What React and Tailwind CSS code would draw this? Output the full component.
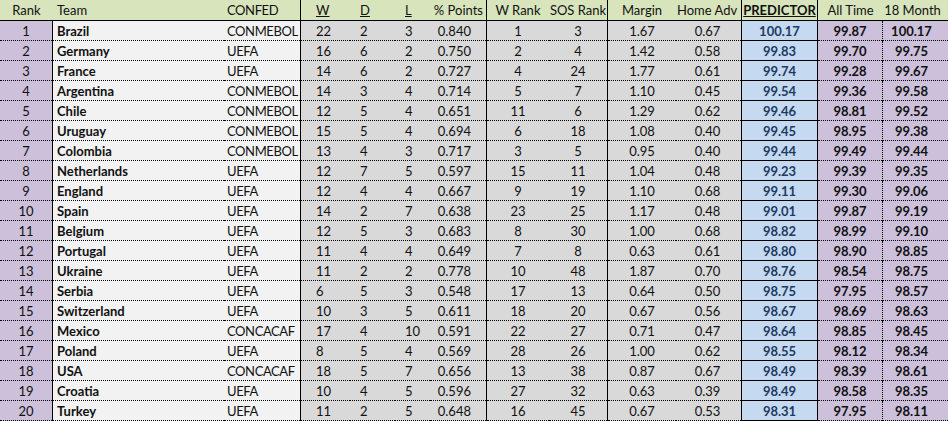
import React from "react";

const rows = [
  [1, "Brazil", "CONMEBOL", 22, 2, 3, "0.840", 1, 3, "1.67", "0.67", "100.17", "99.87", "100.17"],
  [2, "Germany", "UEFA", 16, 6, 2, "0.750", 2, 4, "1.42", "0.58", "99.83", "99.70", "99.75"],
  [3, "France", "UEFA", 14, 6, 2, "0.727", 4, 24, "1.77", "0.61", "99.74", "99.28", "99.67"],
  [4, "Argentina", "CONMEBOL", 14, 3, 4, "0.714", 5, 7, "1.10", "0.45", "99.54", "99.36", "99.58"],
  [5, "Chile", "CONMEBOL", 12, 5, 4, "0.651", 11, 6, "1.29", "0.62", "99.46", "98.81", "99.52"],
  [6, "Uruguay", "CONMEBOL", 15, 5, 4, "0.694", 6, 18, "1.08", "0.40", "99.45", "98.95", "99.38"],
  [7, "Colombia", "CONMEBOL", 13, 4, 3, "0.717", 3, 5, "0.95", "0.40", "99.44", "99.49", "99.44"],
  [8, "Netherlands", "UEFA", 12, 7, 5, "0.597", 15, 11, "1.04", "0.48", "99.23", "99.39", "99.35"],
  [9, "England", "UEFA", 12, 4, 4, "0.667", 9, 19, "1.10", "0.68", "99.11", "99.30", "99.06"],
  [10, "Spain", "UEFA", 14, 2, 7, "0.638", 23, 25, "1.17", "0.48", "99.01", "99.87", "99.19"],
  [11, "Belgium", "UEFA", 12, 5, 3, "0.683", 8, 30, "1.00", "0.68", "98.82", "98.99", "99.10"],
  [12, "Portugal", "UEFA", 11, 4, 4, "0.649", 7, 8, "0.63", "0.61", "98.80", "98.90", "98.85"],
  [13, "Ukraine", "UEFA", 11, 2, 2, "0.778", 10, 48, "1.87", "0.70", "98.76", "98.54", "98.75"],
  [14, "Serbia", "UEFA", 6, 5, 3, "0.548", 17, 13, "0.64", "0.50", "98.75", "97.95", "98.57"],
  [15, "Switzerland", "UEFA", 10, 3, 5, "0.611", 18, 20, "0.67", "0.56", "98.67", "98.69", "98.63"],
  [16, "Mexico", "CONCACAF", 17, 4, 10, "0.591", 22, 27, "0.71", "0.47", "98.64", "98.85", "98.45"],
  [17, "Poland", "UEFA", 8, 5, 4, "0.569", 28, 26, "1.00", "0.62", "98.55", "98.12", "98.34"],
  [18, "USA", "CONCACAF", 18, 5, 7, "0.656", 13, 38, "0.87", "0.67", "98.49", "98.39", "98.61"],
  [19, "Croatia", "UEFA", 10, 4, 5, "0.596", 27, 32, "0.63", "0.39", "98.49", "98.58", "98.35"],
  [20, "Turkey", "UEFA", 11, 2, 5, "0.648", 16, 45, "0.67", "0.53", "98.31", "97.95", "98.11"],
];

const grid =
  "grid grid-cols-[53px_171px_77px_49px_45px_35px_57px_62px_59px_68px_65px_77px_65px_65px]";

function Cell({ className = "", inner = "", solid = false, children }) {
  return (
    <div className={`flex flex-col h-full ${className}`}>
      <div className={`flex items-center h-[19px] pt-[2px] whitespace-nowrap overflow-hidden ${inner}`}>
        {children}
      </div>
      <div className={`border-t border-black ${solid ? "border-solid" : "border-dotted"}`} />
    </div>
  );
}

function H({ className = "", children }) {
  return (
    <div className={`flex items-center h-full pt-[2px] whitespace-nowrap overflow-hidden ${className}`}>
      {children}
    </div>
  );
}

export default function App() {
  return (
    <div
      className="w-[948px] h-[421px] bg-white text-[13px] text-[#111] overflow-hidden"
      style={{ fontFamily: "Lato, 'Open Sans', sans-serif" }}
    >
      <div className={`${grid} h-[21px] bg-[#d8e4bc] border-b border-black`}>
        <H className="justify-center">Rank</H>
        <H className="pl-[4px]">Team</H>
        <H className="pl-[3px] border-r border-black tracking-[-0.4px]">CONFED</H>
        <H className="pl-[15px]"><span className="underline">W</span></H>
        <H className="pl-[10px]"><span className="underline">D</span></H>
        <H className="pl-[10px]"><span className="underline">L</span></H>
        <H className="justify-end pr-[3px] border-r border-black">% Points</H>
        <H className="justify-center">W Rank</H>
        <H className="justify-center border-r border-black">SOS Rank</H>
        <H className="justify-center">Margin</H>
        <H className="pl-[1px]">Home Adv</H>
        <H className="justify-center font-bold border-l border-r border-black">
          <span className="underline">PREDICTOR</span>
        </H>
        <H className="justify-center">All Time</H>
        <H className="justify-center pr-[6px]">18 Month</H>
      </div>
      {rows.map((r) => (
        <div key={r[0]} className={`${grid} h-[20px]`}>
          <Cell className="bg-[#ccc0da] border-r border-black" inner="justify-center">{r[0]}</Cell>
          <Cell className="bg-[#f2f2f2]" inner="pl-[4px] font-bold">{r[1]}</Cell>
          <Cell className="bg-[#f2f2f2] border-r border-black" inner="pl-[3px] tracking-[-0.4px]">{r[2]}</Cell>
          <Cell className="bg-[#d9d9d9]" inner="pl-[15px]">{r[3]}</Cell>
          <Cell className="bg-[#d9d9d9]" inner="pl-[10px]">{r[4]}</Cell>
          <Cell className="bg-[#d9d9d9]" inner="pl-[10px]">{r[5]}</Cell>
          <Cell className="bg-[#d9d9d9] border-r border-black" inner="justify-end pr-[15px]">{r[6]}</Cell>
          <Cell className="bg-[#d9d9d9]" inner="justify-center">{r[7]}</Cell>
          <Cell className="bg-[#d9d9d9] border-r border-black" inner="justify-center">{r[8]}</Cell>
          <Cell className="bg-[#d9d9d9]" inner="justify-center">{r[9]}</Cell>
          <Cell className="bg-[#d9d9d9]" inner="justify-center pr-[2px]">{r[10]}</Cell>
          <Cell solid className="bg-[#c5d9f1] border-l border-r border-black" inner="justify-center font-bold text-[#1f3a5f]">
            {r[11]}
          </Cell>
          <Cell className="bg-[#ccc0da] border-r border-dotted border-black" inner="justify-center font-bold">{r[12]}</Cell>
          <Cell className="bg-[#ccc0da]" inner="justify-center font-bold pr-[8px]">{r[13]}</Cell>
        </div>
      ))}
    </div>
  );
}
